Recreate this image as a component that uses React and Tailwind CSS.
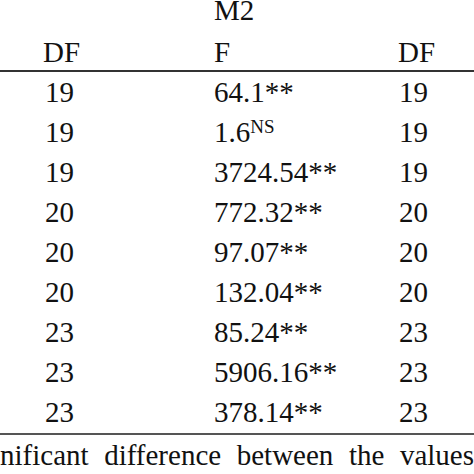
const rows = [
  ['19', '64.1**', null, '19'],
  ['19', '1.6', 'NS', '19'],
  ['19', '3724.54**', null, '19'],
  ['20', '772.32**', null, '20'],
  ['20', '97.07**', null, '20'],
  ['20', '132.04**', null, '20'],
  ['23', '85.24**', null, '23'],
  ['23', '5906.16**', null, '23'],
  ['23', '378.14**', null, '23'],
]

export default function App() {
  return (
    <div className="h-[474px] w-[474px] overflow-hidden bg-white font-['Liberation_Serif',serif] text-[29px] leading-[40px] text-[#111]">
      {/* header */}
      <div className="grid h-[32px] grid-cols-[171px_184px_1fr] pl-[43px] leading-[21px]">
        <div />
        <div>M2</div>
        <div />
      </div>
      <div className="grid h-[38px] grid-cols-[171px_184px_1fr] pl-[43px]">
        <div>DF</div>
        <div>F</div>
        <div>DF</div>
      </div>
      <div className="h-[2px] bg-[#333]" />

      {rows.map(([a, f, sup, b], i) => (
        <div key={i} className="grid h-[40px] grid-cols-[171px_184px_1fr] pl-[45px]">
          <div>{a}</div>
          <div className="-ml-[2px]">
            {f}
            {sup && <sup className="top-[-9px] text-[19px]">{sup}</sup>}
          </div>
          <div className="ml-[-1px]">{b}</div>
        </div>
      ))}

      <div className="mt-[1px] h-[2px] bg-[#555]" />
      <div className="flex justify-between">
        <span>nificant</span>
        <span>difference</span>
        <span>between</span>
        <span>the</span>
        <span>values</span>
      </div>
    </div>
  )
}
